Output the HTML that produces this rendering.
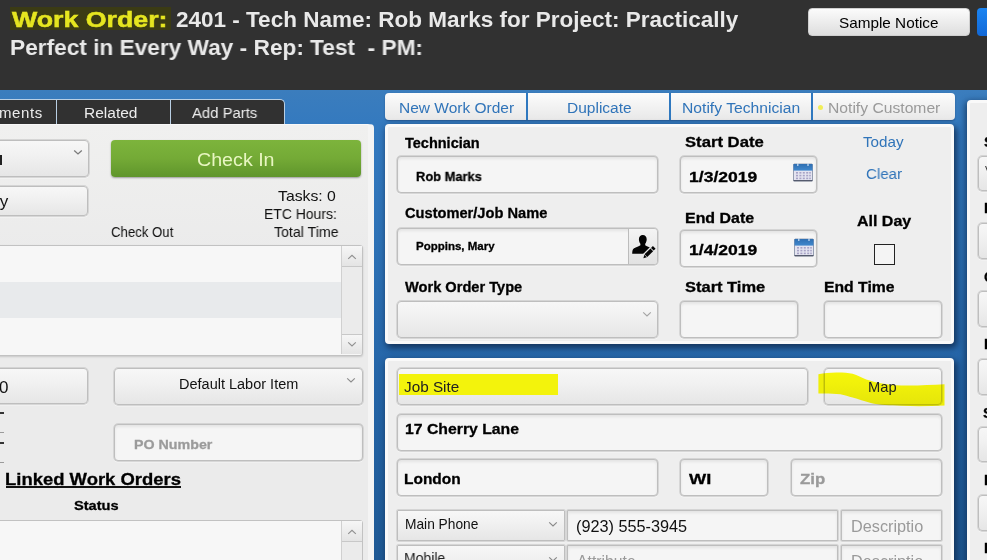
<!DOCTYPE html>
<html>
<head>
<meta charset="utf-8">
<title>Work Order</title>
<style>
*{box-sizing:border-box;margin:0;padding:0}
html,body{width:987px;height:560px;overflow:hidden;background:#313131}
body{font-family:"Liberation Sans",sans-serif;position:relative;color:#111}
.a{position:absolute}
.t{position:absolute;white-space:nowrap;line-height:1;transform-origin:0 0;will-change:transform}
#hdr{left:0;top:0;width:987px;height:90px;background:#313131}
#blue{left:0;top:90px;width:987px;height:470px;background:linear-gradient(#3b7dbd 0,#3379bf 40px,#2e72b6 150px,#2464a6 300px,#1f5994 470px)}
.fld{position:absolute;border:1px solid #bebebe;border-radius:4px;background:linear-gradient(#f7f7f7,#f1f1f1 40%,#e6e6e6);box-shadow:0 0 0 .7px #cdcdcd,0 1.5px 0 #f5f5f5}
.inp{background:#f5f5f5;box-shadow:0 0 0 .7px #cdcdcd,0 1.5px 0 #f5f5f5,inset 0 2px 3px rgba(0,0,0,.07)}
.pan{position:absolute;background:#eeeeee;border:3px solid #f9f9f9;border-radius:4px;box-shadow:2px 3px 6px 1px rgba(16,44,80,.85)}
.lbl{font-weight:bold;font-size:15px;color:#111}
</style>
</head>
<body>
<div class="a" id="hdr"></div>
<div class="a" id="blue"></div>

<!-- HEADER TEXT -->
<div class="a" id="hl1" style="left:10px;top:7.3px;width:160.5px;height:23px;background:#3b3b14"></div>

<!-- sample notice -->
<div class="a" id="sn" style="left:808px;top:8px;width:162px;height:28px;border-radius:4px;background:linear-gradient(#fbfbfb,#dedede);border:1px solid #cfcfcf"></div>
<div class="a" id="bb" style="left:977px;top:8px;width:20px;height:28px;border-radius:4px;background:linear-gradient(#1a84f2,#1268d6)"></div>

<!-- TABS -->
<div class="a" id="tab1" style="left:-20px;top:99px;width:77px;height:26px;background:#313131;border:1px solid #b9cfe4;border-bottom:none"></div>
<div class="a" id="tab2" style="left:56px;top:99px;width:115px;height:26px;background:#313131;border:1px solid #b9cfe4;border-bottom:none"></div>
<div class="a" id="tab3" style="left:170px;top:99px;width:115px;height:26px;background:#313131;border:1px solid #b9cfe4;border-bottom:none;border-top-right-radius:5px"></div>
<div class="t" id="tt1" style="left:-1px;top:105px;font-size:15px;color:#ececec;letter-spacing:.6px">ments</div>

<!-- LEFT PANEL -->
<div class="a" id="lp" style="left:-10px;top:124px;width:384px;height:450px;background:linear-gradient(#f0f0ef,#ebebeb 130px);border-top-right-radius:4px;border-right:6px solid #f4f4f4;border-top:1px solid #f8f8f8"></div>
<div class="fld" id="ld1" style="left:-10px;top:140px;width:99px;height:37px"></div>
<div class="fld" id="ld2" style="left:-10px;top:186px;width:98px;height:30px"></div>
<div class="a" id="gb" style="left:111px;top:140px;width:250px;height:37px;border-radius:4px;background:linear-gradient(#7db43c,#74aa36 50%,#5f952b);box-shadow:0 1px 2px rgba(0,0,0,.35)"></div>
<div class="a" id="lst1" style="left:-10px;top:245px;width:373px;height:110.5px;background:#f7f7f7;border:1px solid #c2c2c2;border-radius:3px;box-shadow:0 1px 2px rgba(0,0,0,.15)"></div>
<div class="a" id="band" style="left:0;top:282px;width:341px;height:36px;background:#e8eaec"></div>
<div class="a" id="sb1" style="left:341px;top:246px;width:21px;height:108px;background:#ebebeb;border-left:1px solid #d0d0d0"></div>
<div class="a" id="sb1u" style="left:342px;top:246px;width:20px;height:21px;background:linear-gradient(#f6f6f6,#e4e4e4);border-bottom:1px solid #c8c8c8"></div>
<div class="a" id="sb1d" style="left:342px;top:334px;width:20px;height:20px;background:linear-gradient(#f6f6f6,#e4e4e4);border-top:1px solid #c8c8c8"></div>
<div class="fld" id="lz" style="left:-10px;top:368px;width:98px;height:36px"></div>
<div class="fld" id="dli" style="left:114px;top:368px;width:249px;height:36.5px"></div>
<div class="fld inp" id="po" style="left:114px;top:424px;width:249px;height:36.5px"></div>
<div class="a" id="lst2" style="left:-10px;top:520px;width:373px;height:60px;background:#f7f7f7;border:1px solid #c2c2c2;border-radius:3px"></div>
<div class="a" id="sb2" style="left:341px;top:521px;width:21px;height:50px;background:#ebebeb;border-left:1px solid #d0d0d0"></div>
<div class="a" id="sb2u" style="left:342px;top:521px;width:20px;height:21px;background:linear-gradient(#f6f6f6,#e4e4e4);border-bottom:1px solid #c8c8c8"></div>

<!-- BUTTON BAR -->
<div class="a" id="bar" style="left:385px;top:93px;width:570px;height:27px;border-radius:4px;background:linear-gradient(#fcfcfc,#e8e8e8);overflow:hidden;box-shadow:0 1px 2px rgba(0,0,30,.3)">
 <div class="a" style="left:141px;top:0;width:2px;height:27px;background:#2f78bf"></div>
 <div class="a" style="left:284px;top:0;width:2px;height:27px;background:#2f78bf"></div>
 <div class="a" style="left:426px;top:0;width:2px;height:27px;background:#2f78bf"></div>
</div>
<div class="a" id="dot" style="left:818.3px;top:105px;width:4.6px;height:4.6px;border-radius:3px;background:#f1ee58"></div>

<!-- MID PANEL 1 -->
<div class="pan" id="mp1" style="left:385px;top:124px;width:569px;height:220px"></div>
<div class="fld inp" id="f1" style="left:397px;top:156px;width:261px;height:37px"></div>
<div class="fld inp" id="f2" style="left:397px;top:228px;width:261px;height:37px"></div>
<div class="a" id="f2b" style="left:628px;top:229px;width:29px;height:35px;border-left:1px solid #bcbcbc;border-radius:0 3px 3px 0;background:linear-gradient(#f4f4f4,#e2e2e2)"></div>
<div class="fld" id="f3" style="left:397px;top:301px;width:261px;height:37px"></div>

<div class="fld inp" id="f4" style="left:680px;top:156px;width:137px;height:37px"></div>
<div class="fld inp" id="f5" style="left:680px;top:230px;width:137px;height:37px"></div>
<div class="fld inp" id="f6" style="left:680px;top:301px;width:118px;height:37px"></div>
<div class="fld inp" id="f7" style="left:824px;top:301px;width:118px;height:37px"></div>
<div class="a" id="cb" style="left:874px;top:244px;width:21px;height:21px;border:1.5px solid #222;background:#f4f4f4"></div>

<!-- MID PANEL 2 -->
<div class="pan" id="mp2" style="left:385px;top:358px;width:569px;height:230px"></div>
<div class="fld" id="g1" style="left:397px;top:368px;width:411px;height:37px"></div>
<div class="a" id="hl2" style="left:399px;top:374.3px;width:159.4px;height:20.6px;background:#f3f30c"></div>
<div class="fld" id="g2" style="left:824px;top:368px;width:118px;height:37px"></div>
<div class="fld inp" id="g3" style="left:397px;top:414px;width:545px;height:37px"></div>
<div class="fld inp" id="g4" style="left:397px;top:459px;width:261px;height:37px"></div>
<div class="fld inp" id="g5" style="left:680px;top:459px;width:88px;height:37px"></div>
<div class="fld inp" id="g6" style="left:791px;top:459px;width:151px;height:37px"></div>

<div class="fld" id="p1" style="left:397px;top:510px;width:168px;height:31px;border-radius:1px"></div>
<div class="fld inp" id="p2" style="left:567px;top:510px;width:271px;height:31px;border-radius:1px"></div>
<div class="fld inp" id="p3" style="left:841px;top:510px;width:101px;height:31px;border-radius:1px"></div>
<div class="fld" id="q1" style="left:397px;top:545px;width:168px;height:31px;border-radius:1px"></div>
<div class="fld inp" id="q2" style="left:567px;top:545px;width:271px;height:31px;border-radius:1px"></div>
<div class="fld inp" id="q3" style="left:841px;top:545px;width:101px;height:31px;border-radius:1px"></div>

<!-- RIGHT PANEL -->
<div class="pan" id="rp" style="left:967px;top:100px;width:60px;height:500px;box-shadow:-1px 2px 6px 1px rgba(16,44,80,.7)"></div>


<div class="fld" id="rb0" style="left:978px;top:155.5px;width:40px;height:35.5px"></div>
<div class="fld" id="rb1" style="left:978px;top:223.3px;width:40px;height:35.5px"></div>
<div class="fld" id="rb2" style="left:978px;top:291px;width:40px;height:35.5px"></div>
<div class="fld" id="rb3" style="left:978px;top:359.3px;width:40px;height:35.5px"></div>
<div class="fld" id="rb4" style="left:978px;top:426.7px;width:40px;height:35.5px"></div>
<div class="fld" id="rb5" style="left:978px;top:495px;width:40px;height:35.5px"></div>
<div class="fld" id="rb6" style="left:978px;top:562.5px;width:40px;height:35.5px"></div>
<div class="t" id="rl0" style="left:983.5px;top:134.7px;font-size:14.5px;font-weight:bold;color:#000;-webkit-text-stroke:.3px #000">S</div>
<div class="t" id="rl1" style="left:984.1px;top:201.1px;font-size:14.5px;font-weight:bold;color:#000;-webkit-text-stroke:.3px #000">P</div>
<div class="t" id="rl2" style="left:983.5px;top:269.7px;font-size:14.5px;font-weight:bold;color:#000;-webkit-text-stroke:.3px #000">C</div>
<div class="t" id="rl3" style="left:984.1px;top:336.7px;font-size:14.5px;font-weight:bold;color:#000;-webkit-text-stroke:.3px #000">E</div>
<div class="t" id="rl4" style="left:983.3px;top:406.4px;font-size:14.5px;font-weight:bold;color:#000;-webkit-text-stroke:.3px #000">S</div>
<div class="t" id="rl5" style="left:984.1px;top:473.09999999999997px;font-size:14.5px;font-weight:bold;color:#000;-webkit-text-stroke:.3px #000">P</div>
<div class="t" id="rl6" style="left:984.1px;top:540.7px;font-size:14.5px;font-weight:bold;color:#000;-webkit-text-stroke:.3px #000">E</div>
<div class="t" id="rv" style="left:985.2px;top:165.3px;font-size:11px;color:#333">V</div>
<!-- EXTRAS -->
<div class="a" id="lwou" style="left:6px;top:486.4px;width:174.5px;height:1.7px;background:#111"></div>
<!-- left partial glyphs -->
<div class="a" id="pg1" style="left:0;top:155px;width:1.5px;height:10.4px;background:#222"></div>
<div class="t" id="pg2" style="left:-6px;top:193px;font-size:17px;color:#111">ry</div>
<div class="t" id="pg3" style="left:-1px;top:379px;font-size:17px;color:#111">0</div>
<div class="a" style="left:0;top:412px;width:4px;height:2px;background:#333"></div>
<div class="a" style="left:0;top:431.5px;width:4px;height:1px;background:#9a9a9a"></div>
<div class="a" style="left:0;top:441.5px;width:4px;height:2px;background:#333"></div>
<div class="a" style="left:0;top:461.5px;width:4px;height:1px;background:#9a9a9a"></div>
<!-- chevrons -->
<svg class="a" id="cv1" style="left:71.65px;top:148.2px" width="12" height="9" viewBox="0 0 12 9"><polyline points="2.2,2.4 6,5.9 9.8,2.4" fill="none" stroke="#7a7a7a" stroke-width="1.3"/></svg>
<svg class="a" id="cv2" style="left:345.35px;top:375.75px" width="12" height="9" viewBox="0 0 12 9"><polyline points="2.2,2.4 6,5.9 9.8,2.4" fill="none" stroke="#8c8c8c" stroke-width="1.15"/></svg>
<svg class="a" id="cv3" style="left:640.6px;top:310.3px" width="12" height="9" viewBox="0 0 12 9"><polyline points="2.2,2.4 6,5.9 9.8,2.4" fill="none" stroke="#a4a4a4" stroke-width="1.15"/></svg>
<svg class="a" id="cv4" style="left:546.8px;top:519.7px" width="12" height="9" viewBox="0 0 12 9"><polyline points="2.2,2.4 6,5.9 9.8,2.4" fill="none" stroke="#888" stroke-width="1.15"/></svg>
<svg class="a" id="cv5" style="left:546.8px;top:554.7px" width="12" height="9" viewBox="0 0 12 9"><polyline points="2.2,2.4 6,5.9 9.8,2.4" fill="none" stroke="#888" stroke-width="1.15"/></svg>
<svg class="a" id="cvu1" style="left:346px;top:253.1px" width="12" height="9" viewBox="0 0 12 9"><polyline points="2.2,5.9 6,2.4 9.8,5.9" fill="none" stroke="#909090" stroke-width="1.15"/></svg>
<svg class="a" id="cvd1" style="left:346px;top:339.7px" width="12" height="9" viewBox="0 0 12 9"><polyline points="2.2,2.4 6,5.9 9.8,2.4" fill="none" stroke="#909090" stroke-width="1.15"/></svg>
<svg class="a" id="cvu2" style="left:345.6px;top:528px" width="12" height="9" viewBox="0 0 12 9"><polyline points="2.2,5.9 6,2.4 9.8,5.9" fill="none" stroke="#909090" stroke-width="1.15"/></svg>
<!-- calendar icons -->
<svg class="a" id="cal1" style="left:792.6px;top:162.8px" width="20" height="19" viewBox="0 0 20 19"><defs><linearGradient id="cg" x1="0" y1="0" x2="0" y2="1"><stop offset="0" stop-color="#2f6fb2"/><stop offset="1" stop-color="#4188cc"/></linearGradient></defs><rect x=".5" y="1" width="19" height="17" rx="1" fill="#e4e4f0" stroke="#5a6a84" stroke-width=".6"/><rect x=".5" y="1" width="19" height="6.6" fill="url(#cg)"/><rect x="4.2" y="0" width="1.2" height="3" fill="#cfe0f4"/><rect x="14.4" y="0" width="1.2" height="3" fill="#cfe0f4"/><g fill="#a7a3c6"><rect x="3" y="9" width="2" height="1.6"/><rect x="6.4" y="9" width="2" height="1.6"/><rect x="9.8" y="9" width="2" height="1.6"/><rect x="13.2" y="9" width="2" height="1.6"/><rect x="16.2" y="9" width="1.6" height="1.6"/><rect x="3" y="11.8" width="2" height="1.6"/><rect x="6.4" y="11.8" width="2" height="1.6"/><rect x="9.8" y="11.8" width="2" height="1.6"/><rect x="13.2" y="11.8" width="2" height="1.6"/><rect x="16.2" y="11.8" width="1.6" height="1.6"/><rect x="3" y="14.6" width="2" height="1.6"/><rect x="6.4" y="14.6" width="2" height="1.6"/><rect x="9.8" y="14.6" width="2" height="1.6"/><rect x="13.2" y="14.6" width="2" height="1.6"/><rect x="16.2" y="14.6" width="1.6" height="1.6"/></g><rect x=".5" y="17.2" width="19" height="1" fill="#3c4356"/></svg>
<svg class="a" id="cal2" style="left:793.8px;top:237.6px" width="20" height="19" viewBox="0 0 20 19"><rect x=".5" y="1" width="19" height="17" rx="1" fill="#e4e4f0" stroke="#5a6a84" stroke-width=".6"/><rect x=".5" y="1" width="19" height="6.6" fill="url(#cg)"/><rect x="4.2" y="0" width="1.2" height="3" fill="#cfe0f4"/><rect x="14.4" y="0" width="1.2" height="3" fill="#cfe0f4"/><g fill="#a7a3c6"><rect x="3" y="9" width="2" height="1.6"/><rect x="6.4" y="9" width="2" height="1.6"/><rect x="9.8" y="9" width="2" height="1.6"/><rect x="13.2" y="9" width="2" height="1.6"/><rect x="16.2" y="9" width="1.6" height="1.6"/><rect x="3" y="11.8" width="2" height="1.6"/><rect x="6.4" y="11.8" width="2" height="1.6"/><rect x="9.8" y="11.8" width="2" height="1.6"/><rect x="13.2" y="11.8" width="2" height="1.6"/><rect x="16.2" y="11.8" width="1.6" height="1.6"/><rect x="3" y="14.6" width="2" height="1.6"/><rect x="6.4" y="14.6" width="2" height="1.6"/><rect x="9.8" y="14.6" width="2" height="1.6"/><rect x="13.2" y="14.6" width="2" height="1.6"/><rect x="16.2" y="14.6" width="1.6" height="1.6"/></g><rect x=".5" y="17.2" width="19" height="1" fill="#3c4356"/></svg>
<!-- person-edit icon -->
<svg class="a" id="pic" style="left:630px;top:233px" width="27" height="28" viewBox="0 0 27 28"><defs><clipPath id="pcl"><polygon points="0,0 30,0 30,4.1 6.1,28 0,28"/></clipPath></defs><path clip-path="url(#pcl)" d="M12.8 2C15.2 2 16.7 3.800 16.7 6.300C16.7 8.200 16 9.800 15.2 10.800L15.2 12.200C16.500 13.200 19.500 14.200 21.500 15.200C22.800 15.900 23.200 17.500 23.200 20.700L2.200 20.700C2.200 17.500 2.800 15.900 4.100 15.200C6.100 14.200 9.100 13.200 10.400 12.200L10.400 10.800C9.600 9.800 8.900 8.200 8.900 6.300C8.900 3.800 10.400 2 12.800 2Z" fill="#050505"/><g transform="translate(24.1,14.5) rotate(135)" fill="#050505"><rect x="-.2" y="-1.9" width="2.7" height="3.8"/><rect x="3.3" y="-1.9" width="8.3" height="3.8"/><polygon points="12,-1.7 15.2,0 12,1.7"/></g></svg>
<!-- brush highlight over Map -->
<svg class="a" id="brush" style="left:810px;top:360px;mix-blend-mode:multiply" width="150" height="55" viewBox="810 360 150 55"><path d="M818.4 374.2C824 373 831 372.300 837.4 372.400c6 .1 11 .3 15.200 1.400 5 1.300 9 4 13.600 5.600 9 3 22 5.700 35 6.100 14 .4 30-.5 43.300-1.200V405.600c-14 .6-29 .9-43.300.2-11-.5-22-.8-30.400-2.800-7-1.700-12-3.600-18.200-5.400-4-1.200-8-2.600-12.200-3.300-6.500-1.100-15-.9-22-.900z" fill="#ffff0a"/></svg>
<!-- TEXT -->
<div class="t" id="wo" style="left:12.3px;top:9.4px;font-size:22.5px;font-weight:bold;color:#e6e620;transform:scaleX(1.188);-webkit-text-stroke:.5px #e6e620;">Work Order:</div>
<div class="t" id="h1" style="left:176.0px;top:9.2px;font-size:22.5px;font-weight:bold;color:#e9e9e9;">2401 - Tech Name: Rob Marks for Project: Practically</div>
<div class="t" id="h2" style="left:10.4px;top:35.6px;font-size:22.75px;font-weight:bold;color:#e9e9e9;transform:scaleX(0.996);">Perfect in Every Way - Rep: Test&nbsp; - PM:</div>
<div class="t" id="snt" style="left:838.6px;top:15.5px;font-size:14.5px;color:#000;transform:scaleX(1.055);">Sample Notice</div>
<div class="t" id="tt2" style="left:84.0px;top:105px;font-size:15.5px;color:#ececec;">Related</div>
<div class="t" id="tt3" style="left:192.0px;top:105px;font-size:15.5px;color:#ececec;transform:scaleX(0.959);">Add Parts</div>
<div class="t" id="gbt" style="left:197.2px;top:152px;font-size:17.5px;color:#e8f6c2;transform:scaleX(1.123);">Check In</div>
<div class="t" id="tk" style="left:278.3px;top:188.3px;font-size:15.0px;color:#111;transform:scaleX(1.052);">Tasks: 0</div>
<div class="t" id="etc" style="left:263.5px;top:205.5px;font-size:15.0px;color:#111;transform:scaleX(0.929);">ETC Hours:</div>
<div class="t" id="co" style="left:110.9px;top:223.6px;font-size:15.0px;color:#111;transform:scaleX(0.879);">Check Out</div>
<div class="t" id="tot" style="left:274.0px;top:223.6px;font-size:15.0px;color:#111;transform:scaleX(0.945);">Total Time</div>
<div class="t" id="dlit" style="left:178.9px;top:377.4px;font-size:14.0px;color:#111;transform:scaleX(1.036);">Default Labor Item</div>
<div class="t" id="pot" style="left:133.6px;top:437.7px;font-size:13.5px;font-weight:bold;color:#9b9b9b;transform:scaleX(1.055);-webkit-text-stroke:.3px #9b9b9b;">PO Number</div>
<div class="t" id="lwo" style="left:4.9px;top:470.9px;font-size:17.0px;font-weight:bold;color:#000;transform:scaleX(1.085);-webkit-text-stroke:.3px #000;">Linked Work Orders</div>
<div class="t" id="st" style="left:73.8px;top:498.6px;font-size:13.5px;font-weight:bold;color:#000;transform:scaleX(1.082);-webkit-text-stroke:.3px #000;">Status</div>
<div class="t" id="b1" style="left:398.8px;top:99.7px;font-size:15.5px;color:#3074b9;">New Work Order</div>
<div class="t" id="b2" style="left:566.9px;top:99.7px;font-size:15.5px;color:#3074b9;">Duplicate</div>
<div class="t" id="b3" style="left:682.0px;top:99.7px;font-size:15.5px;color:#3074b9;transform:scaleX(1.011);">Notify Technician</div>
<div class="t" id="b4" style="left:827.6px;top:99.7px;font-size:15.5px;color:#9a9a9a;transform:scaleX(1.011);">Notify Customer</div>
<div class="t" id="l1" style="left:405.0px;top:135.9px;font-size:14.5px;font-weight:bold;color:#000;-webkit-text-stroke:.3px #000;">Technician</div>
<div class="t" id="f1t" style="left:416.4px;top:170.1px;font-size:13.0px;font-weight:bold;color:#000;transform:scaleX(0.99);-webkit-text-stroke:.3px #000;">Rob Marks</div>
<div class="t" id="l2" style="left:405.0px;top:205.9px;font-size:14.5px;font-weight:bold;color:#000;transform:scaleX(1.009);-webkit-text-stroke:.3px #000;">Customer/Job Name</div>
<div class="t" id="f2t" style="left:416.4px;top:240.9px;font-size:11.5px;font-weight:bold;color:#000;-webkit-text-stroke:.3px #000;">Poppins, Mary</div>
<div class="t" id="l3" style="left:405.0px;top:279.7px;font-size:14.5px;font-weight:bold;color:#000;transform:scaleX(1.008);-webkit-text-stroke:.3px #000;">Work Order Type</div>
<div class="t" id="l4" style="left:685.3px;top:134.5px;font-size:14.5px;font-weight:bold;color:#000;transform:scaleX(1.15);-webkit-text-stroke:.3px #000;">Start Date</div>
<div class="t" id="f4t" style="left:689.1px;top:168.7px;font-size:15.0px;font-weight:bold;color:#000;transform:scaleX(1.17);-webkit-text-stroke:.3px #000;">1/3/2019</div>
<div class="t" id="l5" style="left:685.3px;top:210.9px;font-size:14.5px;font-weight:bold;color:#000;transform:scaleX(1.099);-webkit-text-stroke:.3px #000;">End Date</div>
<div class="t" id="f5t" style="left:689.1px;top:242.2px;font-size:15.0px;font-weight:bold;color:#000;transform:scaleX(1.17);-webkit-text-stroke:.3px #000;">1/4/2019</div>
<div class="t" id="l6" style="left:685.3px;top:279.5px;font-size:14.5px;font-weight:bold;color:#000;transform:scaleX(1.136);-webkit-text-stroke:.3px #000;">Start Time</div>
<div class="t" id="l7" style="left:824.3px;top:279.5px;font-size:14.5px;font-weight:bold;color:#000;transform:scaleX(1.086);-webkit-text-stroke:.3px #000;">End Time</div>
<div class="t" id="td" style="left:862.5px;top:133.5px;font-size:15.0px;color:#3074b9;transform:scaleX(1.014);">Today</div>
<div class="t" id="cl" style="left:866.3px;top:166.4px;font-size:15.5px;color:#3074b9;transform:scaleX(0.971);">Clear</div>
<div class="t" id="l8" style="left:856.9px;top:214.4px;font-size:14.5px;font-weight:bold;color:#000;transform:scaleX(1.102);-webkit-text-stroke:.3px #000;">All Day</div>
<div class="t" id="g1t" style="left:404.4px;top:379px;font-size:15.0px;color:#222;transform:scaleX(1.019);">Job Site</div>
<div class="t" id="g2t" style="left:868.4px;top:380px;font-size:14.5px;color:#222;transform:scaleX(1.013);">Map</div>
<div class="t" id="g3t" style="left:405.0px;top:420.8px;font-size:15.0px;font-weight:bold;color:#000;transform:scaleX(1.052);-webkit-text-stroke:.3px #000;">17 Cherry Lane</div>
<div class="t" id="g4t" style="left:404.0px;top:470.8px;font-size:15.0px;font-weight:bold;color:#000;transform:scaleX(1.031);-webkit-text-stroke:.3px #000;">London</div>
<div class="t" id="g5t" style="left:689.1px;top:470.8px;font-size:15.0px;font-weight:bold;color:#000;transform:scaleX(1.212);-webkit-text-stroke:.3px #000;">WI</div>
<div class="t" id="g6t" style="left:800.2px;top:470.8px;font-size:15.0px;font-weight:bold;color:#9a9a9a;transform:scaleX(1.12);-webkit-text-stroke:.3px #9a9a9a;">Zip</div>
<div class="t" id="p1t" style="left:404.6px;top:517.9px;font-size:13.75px;color:#111;">Main Phone</div>
<div class="t" id="p2t" style="left:575.6px;top:518.4px;font-size:16.25px;color:#111;transform:scaleX(0.996);">(923) 555-3945</div>
<div class="t" id="p3t" style="left:850.6px;top:518.2px;font-size:16.25px;color:#9a9a9a;">Descriptio</div>
<div class="t" id="q1t" style="left:404.1px;top:550.4px;font-size:15.0px;color:#222;transform:scaleX(0.934);">Mobile</div>
<div class="t" id="q2t" style="left:577.0px;top:554.4px;font-size:15.75px;color:#9a9a9a;">Attribute</div>
<div class="t" id="q3t" style="left:850.6px;top:553.2px;font-size:16.25px;color:#9a9a9a;">Descriptio</div>
</body>
</html>
